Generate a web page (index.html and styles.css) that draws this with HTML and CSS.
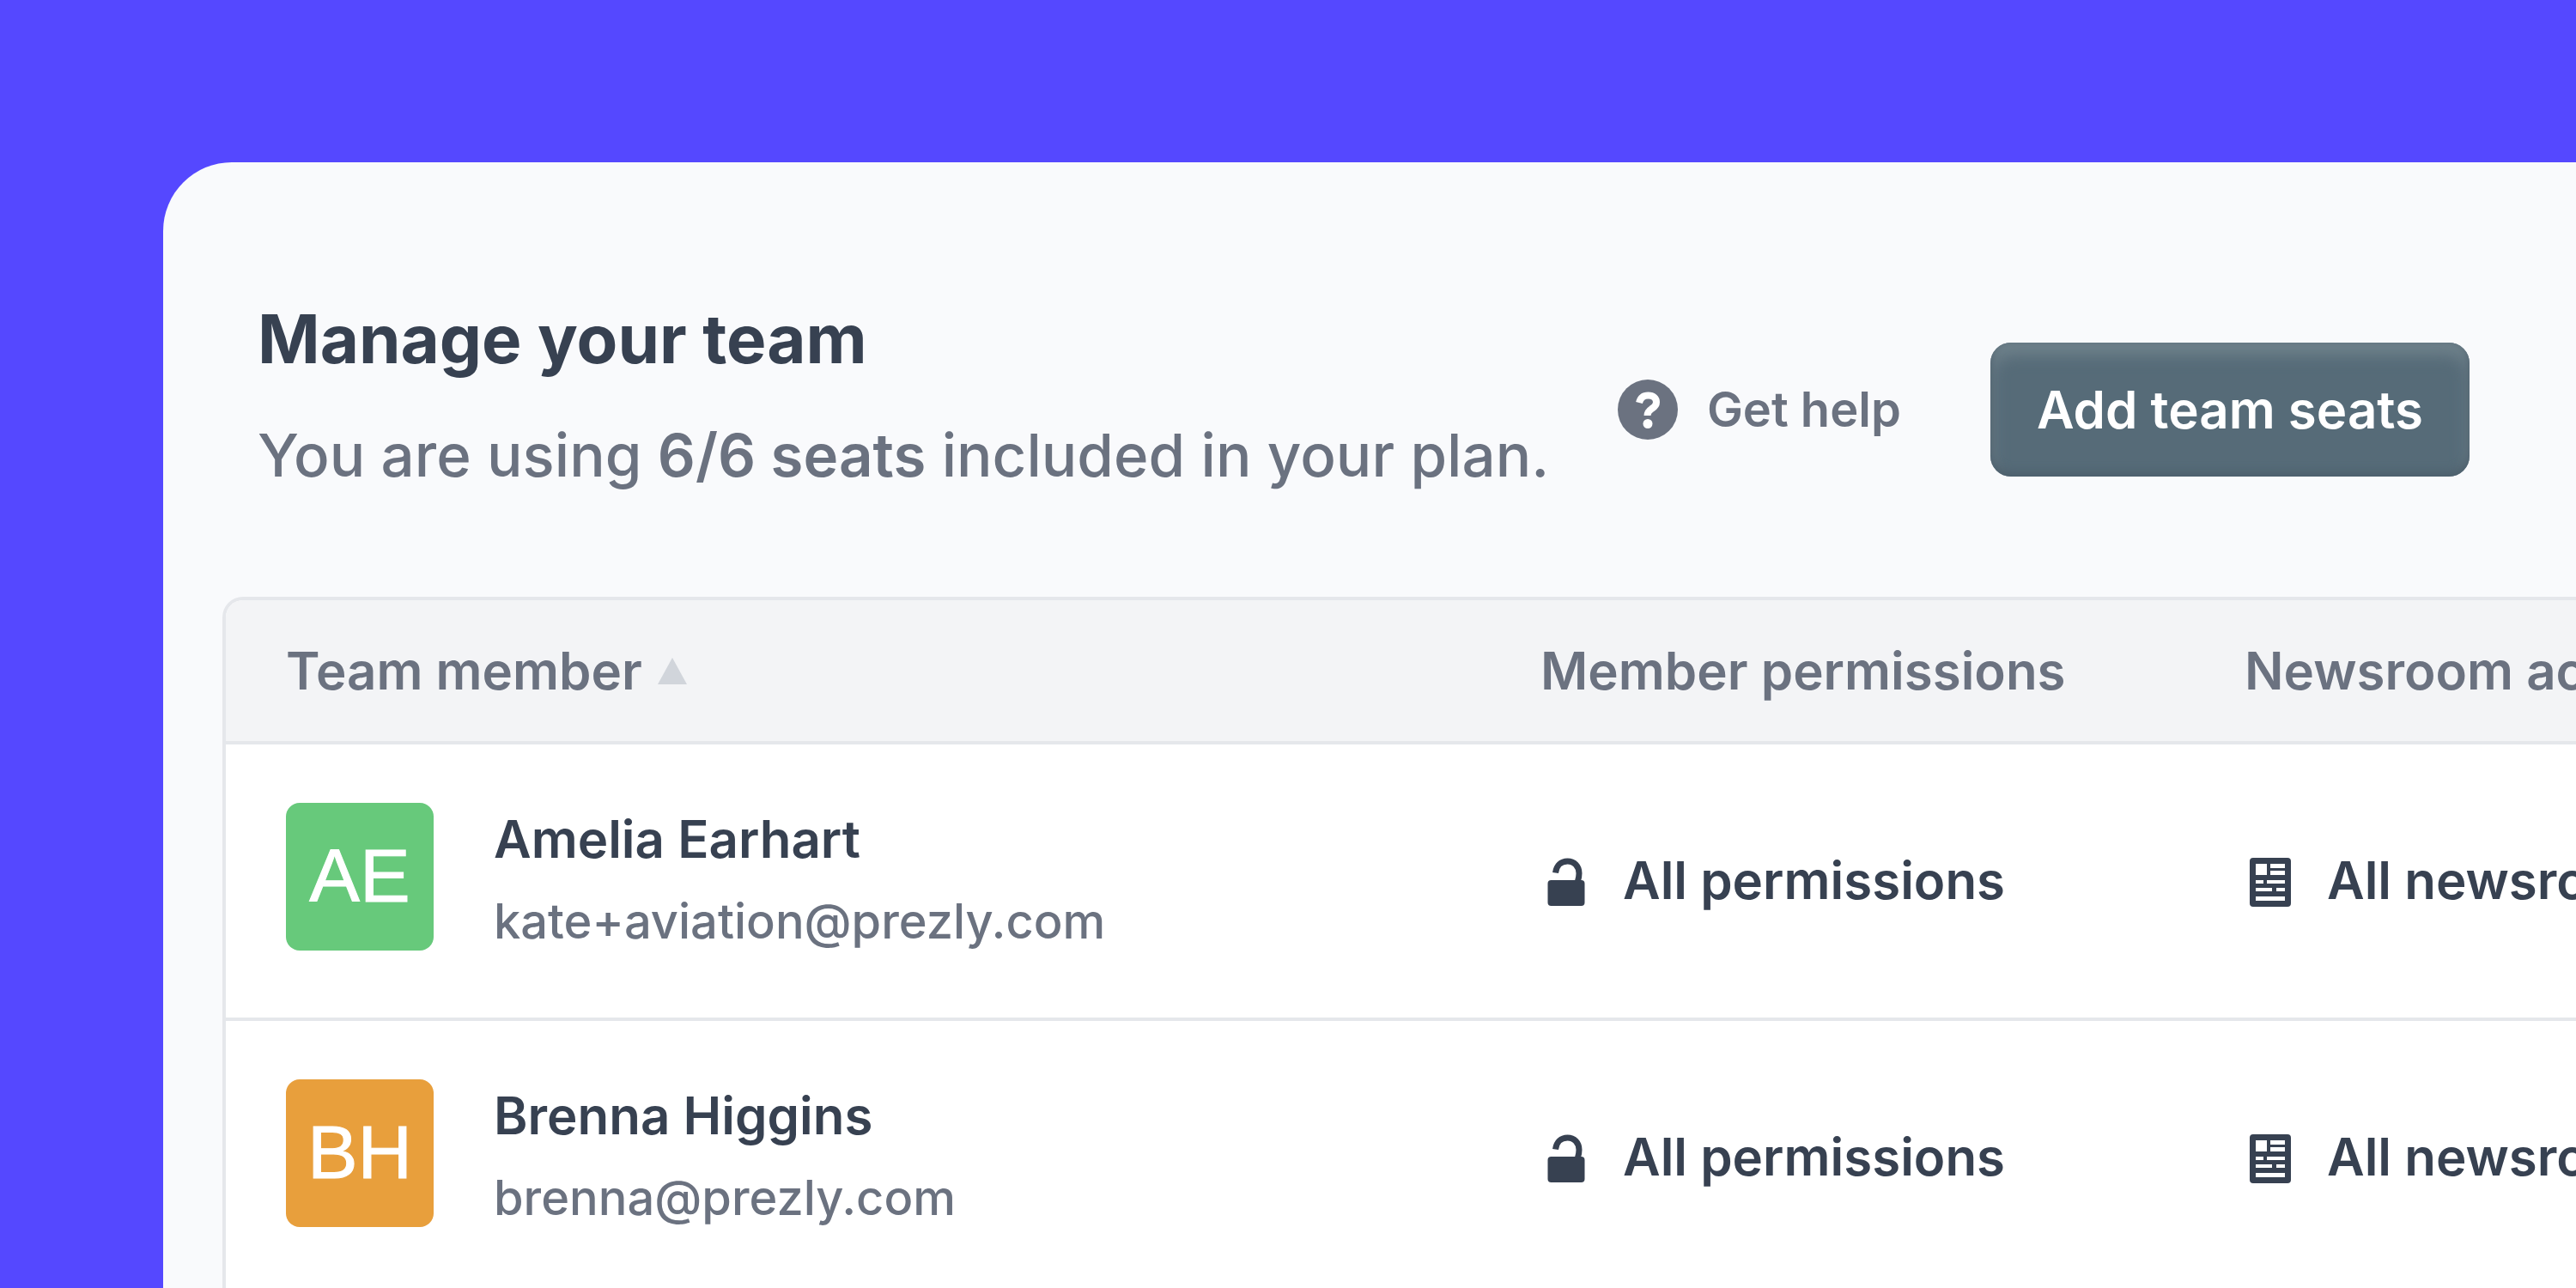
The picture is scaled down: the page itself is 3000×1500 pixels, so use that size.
FILE: index.html
```html
<!DOCTYPE html>
<html lang="en">

<head>
    <meta charset="UTF-8">
    <meta name="viewport" content="width=device-width, initial-scale=1.0">
    <title>Manage your team</title>
    <link rel="stylesheet" href="styles.css">
</head>

<body>
    <!-- shared icons -->
    <svg class="sprite" aria-hidden="true">
        <symbol id="lock" viewBox="0 0 43 57">
            <path d="M9 17.500C10 9 15.500 4 23 4C31 4 36.500 10 36.500 18C36.500 22 36 24 35 27" fill="none" stroke="currentColor" stroke-width="7" />
            <rect x="0" y="26" width="43" height="30" rx="4" fill="currentColor" />
        </symbol>
        <symbol id="news" viewBox="0 0 48 57">
            <path fill="currentColor" fill-rule="evenodd" d="M4 0h40a4 4 0 0 1 4 4v49a4 4 0 0 1-4 4H4a4 4 0 0 1-4-4V4a4 4 0 0 1 4-4zM7 7v13h13V7zM24 7v5h17V7zM24 15v5h17v-5zM7 26v4h9v-4zM20 26v4h21v-4zM7 35v4h19v-4zM31 35v4h10v-4zM7 45v5h34v-5z" />
        </symbol>
    </svg>

    <main class="panel">
        <header class="top">
            <div class="intro">
                <h1>Manage your team</h1>
                <p>You are using <strong>6/6 seats</strong> included in your plan.</p>
            </div>
            <div class="actions">
                <a class="help" href="#help">
                    <svg class="help-icon" viewBox="0 0 70 70" aria-hidden="true">
                        <circle cx="35" cy="35" r="35" fill="currentColor" />
                        <path d="M25 27C26.500 21 30 18.500 35.500 18.500C41.500 18.500 45 22 45 26.500C45 31 42 32.500 39 34.500C36 36.500 34.500 38 34.500 42" fill="none" stroke="#fff" stroke-width="8" />
                        <circle cx="35" cy="51.500" r="5.500" fill="#fff" />
                    </svg>
                    Get help
                </a>
                <button class="btn" type="button">Add team seats</button>
            </div>
        </header>

        <div class="table-box">
            <table class="team">
                <colgroup>
                    <col class="col-member">
                    <col class="col-perm">
                    <col>
                </colgroup>
                <thead>
                    <tr>
                        <th><span class="sort">Team member</span></th>
                        <th>Member permissions</th>
                        <th>Newsroom access</th>
                    </tr>
                </thead>
                <tbody>
                    <tr>
                        <td>
                            <div class="member">
                                <span class="avatar green">AE</span>
                                <div>
                                    <div class="name">Amelia Earhart</div>
                                    <div class="email">kate+aviation@prezly.com</div>
                                </div>
                            </div>
                        </td>
                        <td>
                            <div class="access"><svg class="icon" aria-hidden="true"><use href="#lock" /></svg>All permissions</div>
                        </td>
                        <td>
                            <div class="access"><svg class="icon" aria-hidden="true"><use href="#news" /></svg>All newsrooms</div>
                        </td>
                    </tr>
                    <tr>
                        <td>
                            <div class="member">
                                <span class="avatar orange">BH</span>
                                <div>
                                    <div class="name">Brenna Higgins</div>
                                    <div class="email">brenna@prezly.com</div>
                                </div>
                            </div>
                        </td>
                        <td>
                            <div class="access"><svg class="icon" aria-hidden="true"><use href="#lock" /></svg>All permissions</div>
                        </td>
                        <td>
                            <div class="access"><svg class="icon" aria-hidden="true"><use href="#news" /></svg>All newsrooms</div>
                        </td>
                    </tr>
                </tbody>
            </table>
        </div>
    </main>
</body>

</html>
```
FILE: styles.css
```css
* {
    box-sizing: border-box;
}

body {
    margin: 0;
    min-height: 100vh;
    padding: 189px 0 0 190px;
    background: #5548ff;
    color: #374151;
    font-family: Inter, "Liberation Sans", sans-serif;
    display: flex;
    overflow: hidden;
}

.sprite {
    display: none;
}

.panel {
    flex: 1;
    min-width: 0;
    padding-top: 160px;
    background: #f9fafc;
    border-radius: 80px 0 0 0;
    overflow: hidden;
}

/* heading and actions */
.top {
    display: flex;
    justify-content: space-between;
    align-items: center;
    padding: 0 124px 0 110px;
    white-space: nowrap;
}

h1 {
    margin: 0;
    font-size: 78px;
    font-weight: 650;
    line-height: 92px;
}

.intro {
    padding-bottom: 26px;
}

.intro p {
    margin: 40px 0 0;
    font-size: 69px;
    font-weight: 450;
    line-height: 98px;
    color: #6b7280;
}

.intro strong {
    font-weight: 600;
}

.actions {
    display: flex;
    align-items: center;
    gap: 104px;
}

.help {
    display: flex;
    align-items: center;
    gap: 34px;
    color: #6b7280;
    font-size: 56px;
    font-weight: 600;
    text-decoration: none;
}

.help-icon {
    width: 70px;
    height: 70px;
}

.btn {
    height: 156px;
    padding: 0 54px;
    border: 0;
    border-radius: 24px;
    background: #566b78;
    box-shadow: inset 0 -4px 12px #4b5d6a, inset 0 12px 20px #74868f;
    color: #fff;
    font: 600 60px Inter, "Liberation Sans", sans-serif;
}

/* team table, runs past the right edge of the window */
.table-box {
    margin: 90px 0 0 69px;
    width: 110%;
    border: 4px solid #e5e7eb;
    border-bottom: 0;
    border-radius: 24px 0 0 0;
    background: #fff;
    overflow: hidden;
}

.team {
    width: 100%;
    table-layout: fixed;
    border-collapse: collapse;
    white-space: nowrap;
}

.col-member {
    width: 1461px;
}

.col-perm {
    width: 820px;
}

th {
    height: 166px;
    padding: 0 70px;
    border-bottom: 4px solid #e5e7eb;
    background: #f3f4f6;
    color: #6b7280;
    font-size: 60px;
    font-weight: 600;
    text-align: left;
}

.sort::after {
    content: '';
    display: inline-block;
    margin-left: 18px;
    vertical-align: 6px;
    border: 17px solid transparent;
    border-top: 0;
    border-bottom: 31px solid #d1d5db;
}

td {
    height: 322px;
    padding: 0 70px 2px;
    border-bottom: 4px solid #e5e7eb;
}

.member {
    display: flex;
    align-items: center;
    gap: 70px;
}

.avatar {
    width: 172px;
    height: 172px;
    margin-bottom: 8px;
    border-radius: 16px;
    color: #fff;
    font: 88px/170px "Liberation Sans", Arial, sans-serif;
    -webkit-text-stroke: 1px #fff;
    text-align: center;
}

.green {
    background: #67c97b;
}

.orange {
    background: #e89f3c;
}

.name {
    font-size: 60px;
    font-weight: 600;
    line-height: 96px;
}

.email {
    font-size: 56px;
    font-weight: 450;
    line-height: 96px;
    color: #6b7280;
}

.access {
    display: flex;
    align-items: center;
    gap: 38px;
    padding-left: 2px;
    font-size: 60px;
    font-weight: 600;
}

.icon {
    width: 56px;
    height: 57px;
    margin-top: 4px;
}
```
